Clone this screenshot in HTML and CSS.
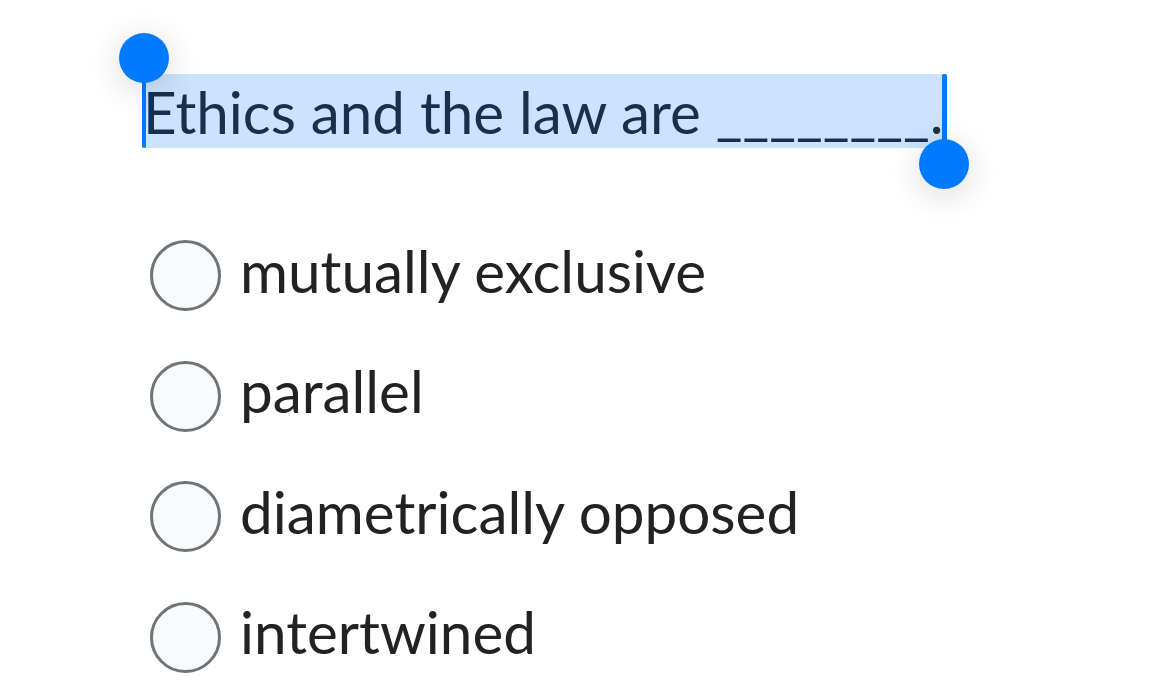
FILE: index.html
```html
<!DOCTYPE html>
<html>
<head>
<meta charset="utf-8">
<link rel="stylesheet" href="styles.css">
</head>
<body>
<div class="page">
  <div class="question">
    <span class="selected">Ethics and the law are ________.<span class="handle handle-start"></span><span class="handle handle-end"></span></span>
  </div>
  <ul class="options">
    <li class="option"><span class="radio"></span><span class="label">mutually exclusive</span></li>
    <li class="option"><span class="radio"></span><span class="label">parallel</span></li>
    <li class="option"><span class="radio"></span><span class="label">diametrically opposed</span></li>
    <li class="option"><span class="radio"></span><span class="label">intertwined</span></li>
  </ul>
</div>
</body>
</html>
```
FILE: styles.css
```css
html, body {
  margin: 0;
  padding: 0;
  background: #ffffff;
}
body {
  font-family: Lato, "Noto Sans", sans-serif;
  width: 1170px;
  height: 690px;
  overflow: hidden;
}
.page {
  padding: 74px 0 0 143px;
}
.question {
  height: 74px;
}
.selected {
  position: relative;
  display: inline-block;
  background: #cce3fd;
  color: #18304c;
  font-size: 58.3px;
  line-height: 74px;
  height: 74px;
  white-space: nowrap;
}
.handle {
  position: absolute;
  width: 4px;
  background: #007aff;
  border-radius: 2px;
}
.handle::after {
  content: "";
  position: absolute;
  width: 50px;
  height: 50px;
  border-radius: 50%;
  background: #007aff;
  left: -23px;
  box-shadow: 0 6px 36px rgba(0, 0, 0, 0.16);
}
.handle-start {
  left: -1px;
  top: -16px;
  height: 90px;
}
.handle-start::after {
  top: -25px;
}
.handle-end {
  right: -3px;
  top: 0;
  height: 90px;
  width: 5px;
}
.handle-end::after {
  top: 65px;
}
.options {
  list-style: none;
  margin: 92px 0 0 7px;
  padding: 0;
  display: flex;
  flex-direction: column;
  gap: 49px;
}
.option {
  display: flex;
  align-items: center;
  height: 71.5px;
  gap: 19px;
}
.radio {
  box-sizing: border-box;
  width: 71px;
  height: 71px;
  border-radius: 50%;
  border: 3px solid #707378;
  background: #f8fafe;
  flex: none;
}
.label {
  font-size: 58.4px;
  color: #222222;
  line-height: 1;
  margin-bottom: 12px;
}
```
